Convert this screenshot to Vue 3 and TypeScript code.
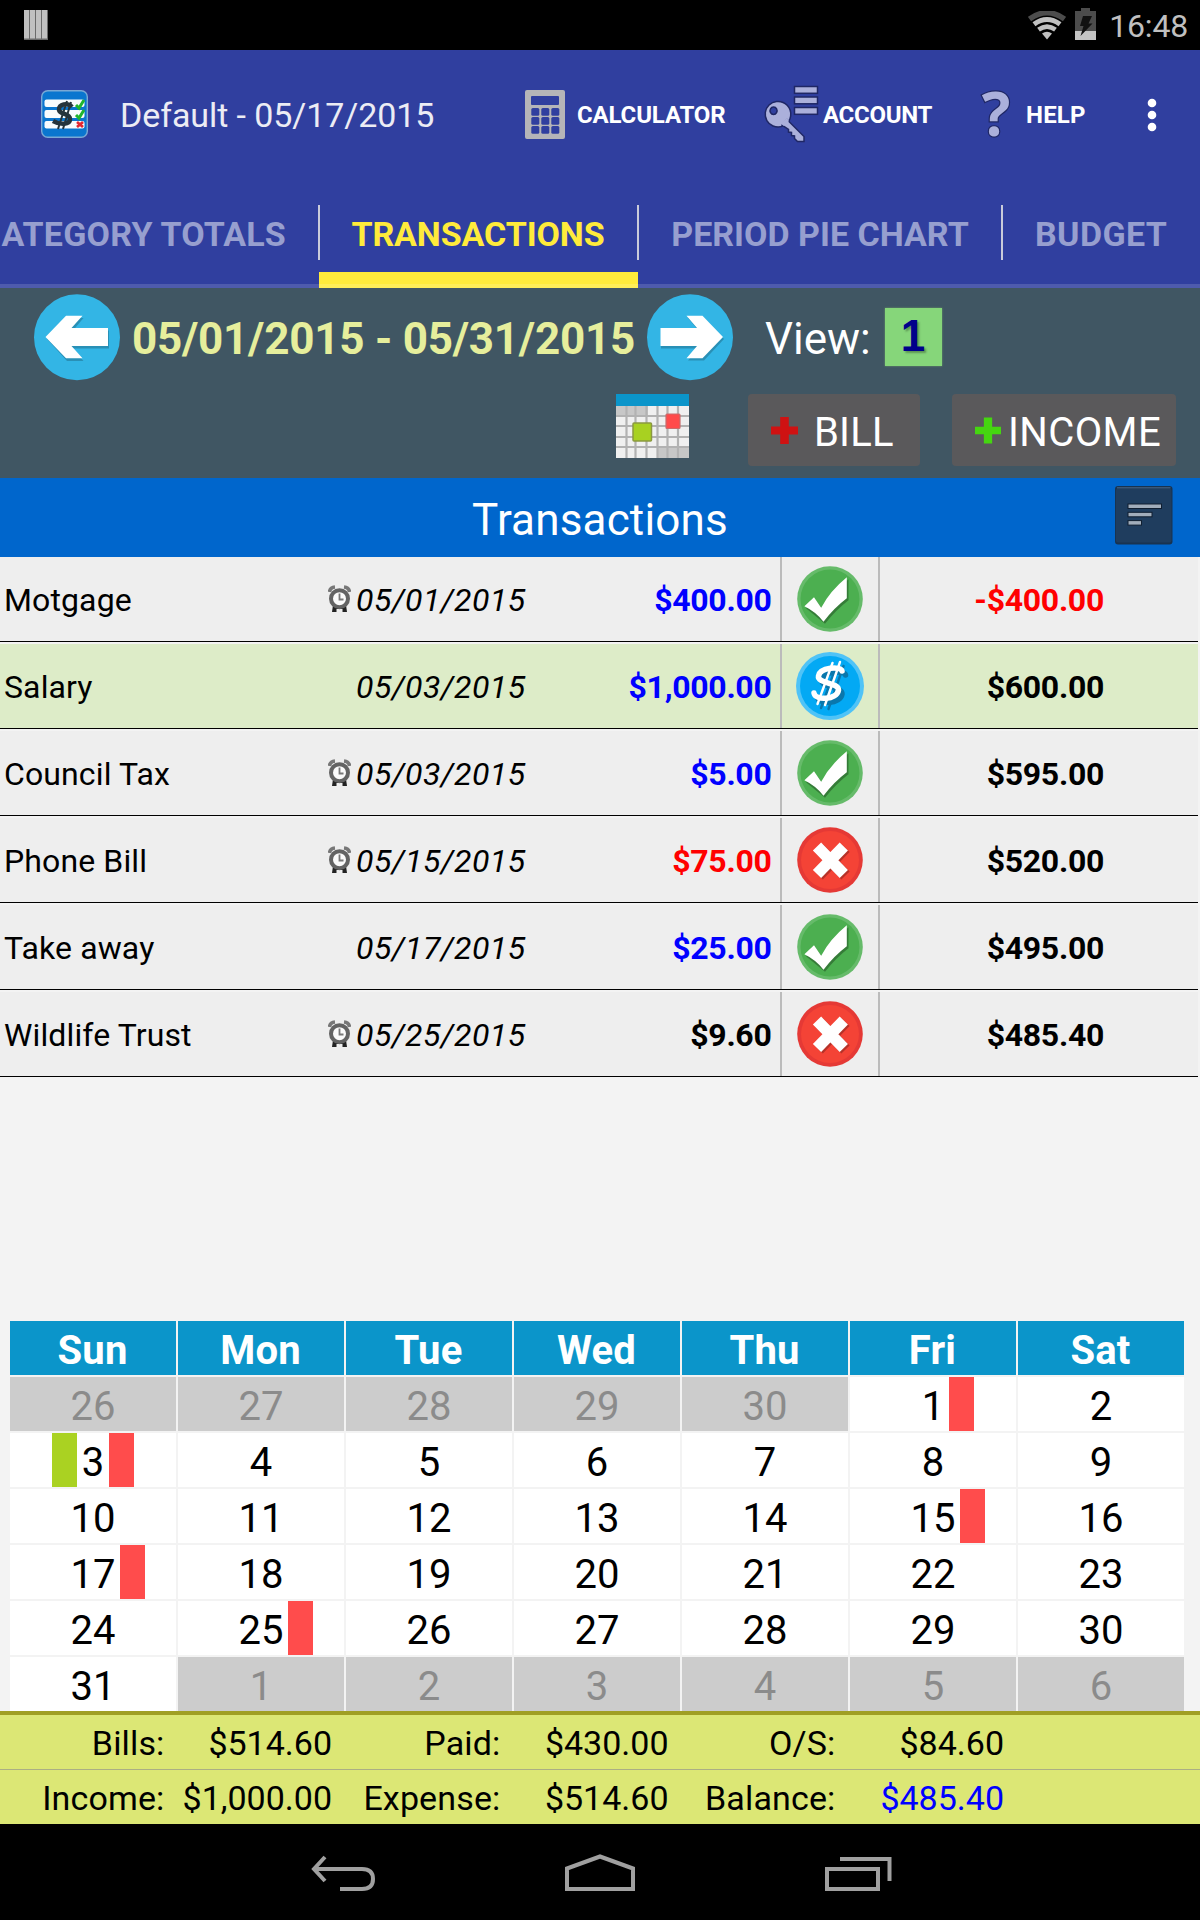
<script setup lang="ts">
type Tone = 'blue' | 'red' | 'black'
type Status = 'paid' | 'income' | 'unpaid'

interface Transaction {
  name: string
  date: string
  alarm: boolean
  amount: string
  tone: Tone
  status: Status
  balance: string
  balanceTone: Tone
}

interface Day {
  label: number
  outside: boolean
  income: boolean
  bill: boolean
}

const transactions: Transaction[] = [
  { name: 'Motgage', date: '05/01/2015', alarm: true, amount: '$400.00', tone: 'blue', status: 'paid', balance: '-$400.00', balanceTone: 'red' },
  { name: 'Salary', date: '05/03/2015', alarm: false, amount: '$1,000.00', tone: 'blue', status: 'income', balance: '$600.00', balanceTone: 'black' },
  { name: 'Council Tax', date: '05/03/2015', alarm: true, amount: '$5.00', tone: 'blue', status: 'paid', balance: '$595.00', balanceTone: 'black' },
  { name: 'Phone Bill', date: '05/15/2015', alarm: true, amount: '$75.00', tone: 'red', status: 'unpaid', balance: '$520.00', balanceTone: 'black' },
  { name: 'Take away', date: '05/17/2015', alarm: false, amount: '$25.00', tone: 'blue', status: 'paid', balance: '$495.00', balanceTone: 'black' },
  { name: 'Wildlife Trust', date: '05/25/2015', alarm: true, amount: '$9.60', tone: 'black', status: 'unpaid', balance: '$485.40', balanceTone: 'black' },
]

const weekdays = ['Sun', 'Mon', 'Tue', 'Wed', 'Thu', 'Fri', 'Sat']
const incomeDays = [3]
const billDays = [1, 3, 15, 17, 25]

// Six weeks starting on Sunday, April 26.
const days: Day[] = Array.from({ length: 42 }, (_, i) => {
  const n = i - 4
  if (n < 1) return { label: n + 30, outside: true, income: false, bill: false }
  if (n > 31) return { label: n - 31, outside: true, income: false, bill: false }
  return { label: n, outside: false, income: incomeDays.includes(n), bill: billDays.includes(n) }
})

const summary = [
  ['Bills:', '$514.60', 'Paid:', '$430.00', 'O/S:', '$84.60'],
  ['Income:', '$1,000.00', 'Expense:', '$514.60', 'Balance:', '$485.40'],
]
</script>

<template>
  <div class="screen">
    <header class="status-bar">
      <svg class="bars" width="24" height="30" viewBox="0 0 24 30">
        <rect width="24" height="30" fill="#6a6a6a" />
        <g fill="#c0c0c0"><rect width="5" height="28.5" /><rect x="6" width="5" height="28.5" /><rect x="12" width="5" height="28.5" /><rect x="18" width="5" height="28.5" /></g>
      </svg>
      <div class="status-right">
        <svg width="38" height="29" viewBox="0 0 38 29" fill="none">
          <path d="M19 28.500L14 22.500Q19 19 24 22.500Z" fill="#c0c0c0" />
          <path d="M1.500 8Q19-4.500 36.500 8" stroke="#4c4c4c" stroke-width="5.500" />
          <path d="M6 13.200Q19 3.800 32 13.200" stroke="#c0c0c0" stroke-width="5" />
          <path d="M10.500 18.700Q19 12.500 27.500 18.700" stroke="#c0c0c0" stroke-width="4.600" />
        </svg>
        <svg class="battery" width="21" height="32" viewBox="0 0 21 32">
          <path d="M0 3H6V0H15V3H21V32H0Z" fill="#4c4c4c" /><path d="M0 23H21V32H0Z" fill="#c4c4c4" />
          <path d="M8 8H17L13.500 15.500H17.500L5.500 28L8.500 18H5Z" fill="#111" />
        </svg>
        <span class="clock">16:48</span>
      </div>
    </header>

    <div class="app-bar">
      <svg class="app-icon" width="47" height="48" viewBox="0 0 47 48">
        <rect x=".7" y=".7" width="45.600" height="46.600" rx="6" fill="#0a76cf" stroke="#79a9d5" stroke-width="1.400" />
        <g fill="#f8fbfd"><rect x="3.500" y="9.500" width="40" height="7.500" rx="2" /><rect x="3.500" y="20" width="40" height="8" rx="2" /><rect x="3.500" y="31" width="40" height="7.500" rx="2" /></g>
        <g fill="none" stroke="#26343c"><path d="M31 17C27 12.500 17 14 18 20C19 25 29 23 29 29C29 35 19 35 12 31" stroke-width="4.500" /><path d="M26 11L17 39M30 12L22 39" stroke-width="2" /></g>
        <g fill="none" stroke="#20b52e" stroke-width="3"><path d="M35 15L38 18L43 10M35 25L38 28L43 20" /></g>
        <path d="M36 32L42 37M42 32L36 37" stroke="#e32832" stroke-width="2.800" />
      </svg>
      <span class="app-title">Default - 05/17/2015</span>
      <div class="action calc">
        <svg width="40" height="49" viewBox="0 0 40 49">
          <path fill-rule="evenodd" fill="#b5b5b8" d="M2 0H38Q40 0 40 2V47Q40 49 38 49H2Q0 49 0 47V2Q0 0 2 0ZM7 6Q6 6 6 7V14Q6 15 7 15H33Q34 15 34 14V7Q34 6 33 6Z" />
          <g fill="#303f9f"><template v-for="r in 3" :key="r"><rect v-for="c in 3" :key="c" :x="6.300 + (c - 1) * 10" :y="18 + (r - 1) * 9" width="8" height="7.800" rx="1.500" /></template></g>
        </svg>
        <span>CALCULATOR</span>
      </div>
      <div class="action account">
        <svg width="56" height="58" viewBox="0 0 56 58">
          <g fill="#abb0db" stroke="#1f2765" stroke-width="1.500">
            <path fill-rule="evenodd" d="M13.500 16.500A12.800 12.800 0 1 1 10 41A12.800 12.800 0 0 1 13.500 16.500ZM10.500 22A3.500 3.800 0 1 0 10.600 22Z" />
            <path d="M19 40L24 34.500L41 51.500V56.500H34.500L31.500 53.500V51L28.500 50.500V47.500L25.500 47V44.500Z" />
            <rect x="31.500" y="1.500" width="23" height="6.800" /><rect x="31.500" y="12" width="23" height="6.800" /><rect x="31.500" y="22.500" width="23" height="6.800" />
          </g>
          <path d="M18 39L24 33L26 36L21 41Z" fill="#abb0db" />
        </svg>
        <span>ACCOUNT</span>
      </div>
      <div class="action help">
        <span class="question">?</span>
        <span>HELP</span>
      </div>
      <svg class="more" width="10" height="34" viewBox="0 0 10 34" fill="#fff"><circle cx="5" cy="5" r="4.300" /><circle cx="5" cy="17" r="4.300" /><circle cx="5" cy="29" r="4.300" /></svg>
    </div>

    <nav class="tabs">
      <div class="tab-row">
        <span class="tab first">ATEGORY TOTALS</span><i class="divider" />
        <span class="tab second active">TRANSACTIONS</span><i class="divider" />
        <span class="tab third">PERIOD PIE CHART</span><i class="divider" />
        <span class="tab fourth">BUDGET</span>
      </div>
      <div class="indicator" />
    </nav>

    <section class="period">
      <div class="period-row">
        <svg width="86" height="87" viewBox="0 0 86 87">
          <circle cx="43" cy="43.300" r="43" fill="#33b5e5" />
          <path d="M13 45L33 24H49.500L39 36.500H75V54.500H39L49.500 67H33Z" fill="#20718f" opacity=".55" />
          <path d="M11.500 43L32 21.700H48.500L37.500 34H74V52H37.500L48.500 64.300H32Z" fill="#fff" />
        </svg>
        <strong class="range">05/01/2015 - 05/31/2015</strong>
        <svg width="86" height="87" viewBox="0 0 86 87">
          <circle cx="43" cy="43.300" r="43" fill="#33b5e5" />
          <path d="M77 45L57 66.500H41L51 54.500H14V36H51L41 24H57Z" fill="#20718f" opacity=".55" />
          <path d="M76 43L55.500 21.700H39.500L50 34H13.500V52H50L39.500 64.300H55.500Z" fill="#fff" />
        </svg>
        <span class="view-label">View:</span>
        <span class="view-box">1</span>
      </div>
      <div class="button-row">
        <svg class="cal-icon" width="73" height="64" viewBox="0 0 73 64">
          <rect width="73" height="64" fill="#f0f0f0" />
          <path d="M0 12H32V22H0ZM42 53H73V64H42Z" fill="#c7c7c7" />
          <path d="M10.500 12V64M19.500 12V64M30.500 12V64M41.500 12V64M51.500 12V64M62 12V64M0 22H73M0 32H73M0 43H73M0 53H73" stroke="#b2b2b2" stroke-width="2.200" />
          <rect width="73" height="12" fill="#0b95ca" />
          <rect x="17" y="29" width="18.500" height="18" rx="1" fill="#a8d121" stroke="#8b9940" stroke-width="1.500" />
          <rect x="50" y="20" width="14" height="14.500" rx="1" fill="#ff4b4b" stroke="#c96c6c" stroke-width="1.200" />
        </svg>
        <button class="btn bill">
          <svg width="27" height="27" viewBox="0 0 27 27"><path d="M9.200 0H17.800V9.500H27V17.500H17.800V27H9.200V17.500H0V9.500H9.200Z" fill="#cf1212" /></svg>
          <span>BILL</span>
        </button>
        <button class="btn income">
          <svg width="26" height="27" viewBox="0 0 27 27"><path d="M9.200 0H17.800V9.500H27V17.500H17.800V27H9.200V17.500H0V9.500H9.200Z" fill="#45d610" /></svg>
          <span>INCOME</span>
        </button>
      </div>
    </section>

    <section class="title-bar">
      <h1>Transactions</h1>
      <svg width="58" height="59" viewBox="0 0 58 59">
        <rect width="57.500" height="58.500" rx="3" fill="#183350" /><rect x="1" y="2.500" width="55.500" height="54" rx="2" fill="#1f3d5e" /><path d="M2 1.800H55.500" stroke="#3a5878" stroke-width="1.400" />
        <g fill="#a1adbb" stroke="#101f31" stroke-width="1"><rect x="13" y="18" width="33.500" height="4.500" /><rect x="13" y="26.300" width="24" height="4.500" /><rect x="13" y="34.600" width="13.500" height="4.500" /></g>
      </svg>
    </section>

    <main class="list">
      <div v-for="t in transactions" :key="t.name" class="item" :class="{ credit: t.status === 'income' }">
        <span class="name">{{ t.name }}</span>
        <span class="alarm">
          <svg v-if="t.alarm" width="23" height="28" viewBox="0 0 23 28">
            <path d="M1.500 7Q2 2.500 7 2M21.500 7Q21 2.500 16 2" fill="none" stroke="#777" stroke-width="3.600" />
            <path d="M5 20L4 27H8.500V24H14.500V27H19L18 20Z" fill="#222" />
            <circle cx="11.500" cy="13.700" r="8.500" fill="#fafafa" stroke="#636363" stroke-width="4" />
            <path d="M11.500 8.500V14.500H15.500" fill="none" stroke="#777" stroke-width="1.800" />
          </svg>
        </span>
        <span class="date">{{ t.date }}</span>
        <span class="amount" :class="t.tone">{{ t.amount }}</span>
        <span class="state">
          <svg v-if="t.status === 'paid'" width="66" height="66" viewBox="0 0 66 66">
            <circle cx="33" cy="33" r="32.800" fill="#66bb6a" /><circle cx="33" cy="33" r="29.500" fill="#4caf50" />
            <path d="M9 42.300L18 33.300L26 43.700Q35 27 51.500 13.300V34.300Q39 44 28 57.700Z" fill="#2d6b30" opacity=".75" />
            <path d="M7.400 40.300L17 31.300L24.200 41.700Q33 25 49.800 11.300V32.300Q37 42 26.500 55.700Q19 46 7.400 40.300Z" fill="#fff" />
          </svg>
          <svg v-else-if="t.status === 'income'" width="68" height="68" viewBox="0 0 68 68" fill="none">
            <circle cx="34" cy="34" r="34" fill="#4fc3f7" /><circle cx="34" cy="34" r="30" fill="#03a9f4" />
            <g transform="translate(3.500 4)" stroke="#0a77ac" stroke-width="5.500" stroke-linecap="round"><path d="M46 19C45 14 24 15 22.500 24C21 32 43 30 42.500 38C41 48 19 49 18 41" /><path d="M36.500 11L21.500 52M44 10L29 53" stroke-width="2.400" /></g>
            <g stroke="#fff" stroke-width="5.500" stroke-linecap="round"><path d="M46 19C45 14 24 15 22.500 24C21 32 43 30 42.500 38C41 48 19 49 18 41" /><path d="M36.500 11L21.500 52M44 10L29 53" stroke-width="2.400" /></g>
          </svg>
          <svg v-else width="66" height="66" viewBox="0 0 66 66">
            <circle cx="33" cy="33" r="32.800" fill="#e53935" /><circle cx="33" cy="33" r="29" fill="#f44336" />
            <path d="M21.700 21L48.500 48.500M48.500 21L21.700 48.500" stroke="#9c2b23" stroke-width="11.500" opacity=".7" />
            <path d="M20 19.500L46.800 47M46.800 19.500L20 47" stroke="#fff" stroke-width="11.500" />
          </svg>
        </span>
        <span class="balance" :class="t.balanceTone">{{ t.balance }}</span>
      </div>
    </main>

    <section class="calendar">
      <div v-for="d in weekdays" :key="d" class="weekday">{{ d }}</div>
      <div v-for="(d, i) in days" :key="i" class="day" :class="{ outside: d.outside }">
        <span class="num">{{ d.label }}<i v-if="d.income" class="mark in" /><i v-if="d.bill" class="mark out" /></span>
      </div>
    </section>

    <footer class="summary">
      <div v-for="(row, r) in summary" :key="r" class="sum-row">
        <span v-for="(cell, c) in row" :key="c" :class="{ blue: r === 1 && c === 5, label: c % 2 === 0 }">{{ cell }}</span>
      </div>
    </footer>

    <div class="nav-bar">
      <svg width="64" height="40" viewBox="0 0 64 40" fill="none" stroke="#a0a0a0" stroke-width="4"><path d="M14 3L3 15L14 27M3 15H51Q62 15 62 25T51 35H29" /></svg>
      <svg width="70" height="40" viewBox="0 0 70 40" fill="none" stroke="#a0a0a0" stroke-width="4"><path d="M2 35V14.500L35 2.500L68 14.500V35Z" /></svg>
      <svg width="67" height="40" viewBox="0 0 67 40" fill="none" stroke="#a0a0a0" stroke-width="4"><path d="M2 15H53V35H2ZM15 5H64.500V27" /></svg>
    </div>
  </div>
</template>

<style>
body { margin: 0; background: #f3f3f3; }
</style>

<style scoped>
.screen { width: 1200px; height: 1920px; display: flex; flex-direction: column; overflow: hidden; background: #f3f3f3; color: #000; font-family: Roboto, sans-serif; }
.screen svg { display: block; flex: none; }
span, strong, h1 { white-space: nowrap; }

.status-bar { height: 50px; background: #000; display: flex; justify-content: space-between; align-items: center; padding: 0 12px 0 24px; }
.status-right { display: flex; align-items: center; color: #c0c0c0; }
.battery { margin: -2px 13px 0 9px; }
.clock { font-size: 32px; line-height: 40px; letter-spacing: -.2px; margin-top: 1px; }

.app-bar { height: 130px; background: #303f9f; display: flex; align-items: center; color: #fff; }
.app-icon { margin-left: 40.500px; margin-right: 32.500px; margin-top: -2px; }
.app-title { font-size: 34px; color: #ececf4; width: 318px; letter-spacing: -.08px; }
.action { display: flex; align-items: center; font-weight: 700; font-size: 24px; }
.calc { margin-left: 87px; width: 238px; }
.calc svg { margin-right: 12px; margin-top: -1px; }
.calc span { letter-spacing: -.15px; }
.account { width: 218px; }
.account svg { margin-right: 4px; margin-top: -2px; }
.account span { letter-spacing: -.3px; }
.help { width: 166px; letter-spacing: .2px; }
.help .question { display: block; width: 32px; margin-right: 14px; margin-left: -1px; font: 700 60px/80px "Open Sans", sans-serif; letter-spacing: 0; color: #abb0db; text-align: center; -webkit-text-stroke: 2.4px #1f2765; paint-order: stroke fill; margin-top: -5px; }

.tabs { height: 108px; background: #303f9f; position: relative; display: flex; flex-direction: column; justify-content: space-between; }
.tab-row { height: 92px; display: flex; padding-top: 25px; box-sizing: border-box; }
.tab { height: 58px; line-height: 58px; font-size: 34px; font-weight: 700; color: #979fcf; text-align: center; }
.tab.active { color: #ffeb3b; letter-spacing: -.1px; }
.first { width: 286px; padding-right: 32px; text-align: right; letter-spacing: .2px; }
.second { width: 316px; padding-right: 1px; }
.third { width: 362px; }
.fourth { width: 160px; padding-left: 32px; text-align: left; letter-spacing: .4px; }
.divider { width: 2px; height: 55px; background: #c9cbda; flex: none; }
.indicator { width: 319px; height: 16px; margin-left: 319px; background: #ffeb3b; }
.tabs::after { content: ""; position: absolute; left: 0; right: 0; bottom: 0; height: 4px; background: rgba(255, 255, 255, .15); }

.period { height: 190px; background: #405663; }
.period-row { height: 103px; display: flex; align-items: center; padding-left: 34px; box-sizing: border-box; }
.period-row > svg { margin-top: -5px; }
.range { flex: none; width: 515px; margin-left: 12px; font-size: 44px; line-height: 52px; font-weight: 700; letter-spacing: -.24px; color: #e6ee9c; margin-top: -1px; }
.view-label { font-size: 44px; line-height: 52px; color: #fff; margin-left: 32px; width: 119.500px; margin-top: -1px; }
.view-box { width: 57px; height: 58px; background: #86d67a; box-shadow: 0 0 2px #6b9c64; color: #00008b; font: 700 44px/56px "Liberation Sans", sans-serif; text-align: center; text-shadow: 2px 2px 2px rgba(0, 0, 0, .3); margin-top: -5px; }
.button-row { display: flex; padding: 3px 24px 0 616px; height: 72px; }
.cal-icon { margin-right: 59px; }
.btn { height: 72px; border: 0; border-radius: 4px; background: #5a595b; color: #fff; font: 400 40px/48px Roboto, sans-serif; display: flex; align-items: center; padding: 5px 0 0 23px; box-sizing: border-box; }
.btn svg { margin-top: -5px; }
.bill { width: 172px; margin-right: 32px; }
.bill span { margin-left: 16px; letter-spacing: .2px; }
.income { width: 224px; }
.income span { margin-left: 7px; letter-spacing: .4px; }

.title-bar { height: 79px; background: #06c; display: flex; align-items: center; color: #fff; position: relative; }
h1 { flex: 1; margin: 5px 0 0; text-align: center; font-size: 44px; line-height: 52px; font-weight: 400; letter-spacing: .17px; }
.title-bar svg { position: absolute; right: 27px; top: 8px; }

.list { height: 764px; }
.item { height: 84px; margin-bottom: 2px; border-bottom: 1px solid #000; width: 1198px; display: flex; align-items: stretch; background: #eee; font-size: 32px; line-height: 86px; }
.item.credit { background: #ddecc8; }
.name { width: 324px; padding-left: 4px; letter-spacing: .12px; }
.alarm { width: 28px; display: flex; align-items: center; }
.date { width: 174px; font-style: italic; letter-spacing: .45px; }
.amount { width: 241.500px; padding-right: 8.500px; border-right: 2px solid #bbb; text-align: right; font-weight: 700; letter-spacing: -.3px; }
.state { width: 96px; border-right: 2px solid #bbb; display: flex; align-items: center; justify-content: center; }
.balance { width: 224px; text-align: right; font-weight: 700; letter-spacing: -.3px; }
.blue { color: #00f; }
.red { color: #f00; }

.calendar { height: 390px; width: 1174px; margin-left: 10px; display: grid; grid-template-columns: repeat(7, 166px); grid-auto-rows: 54px; gap: 2px; }
.weekday { background: #0b95ca; color: #fff; font-weight: 700; font-size: 40px; line-height: 60px; text-align: center; height: 54px; letter-spacing: .2px; box-sizing: border-box; padding-right: 1px; }
.day { background: #fff; font-size: 40px; line-height: 60px; text-align: center; height: 54px; }
.day.outside { background: #ccc; color: #8b8b8b; }
.num { position: relative; display: inline-block; height: 54px; }
.mark { position: absolute; top: 0; width: 25px; height: 54px; }
.mark.in { right: 100%; margin-right: 5px; background: #aad222; }
.mark.out { left: 100%; margin-left: 5px; background: #ff4c4c; }

.summary { height: 113px; box-sizing: border-box; border-top: 4px solid #a09f24; background: #dce775; }
.sum-row { height: 54px; display: grid; grid-template-columns: 164.500px 167.500px 168.500px 168px 167px 168.500px; font-size: 34px; line-height: 56px; text-align: right; }
.sum-row .label { letter-spacing: .15px; }
.sum-row + .sum-row { border-top: 1px solid #abae84; }

.nav-bar { height: 96px; background: #000; display: flex; align-items: flex-start; padding: 30px 0 0 311px; box-sizing: border-box; }
.nav-bar svg + svg { margin-left: 190px; }
</style>
